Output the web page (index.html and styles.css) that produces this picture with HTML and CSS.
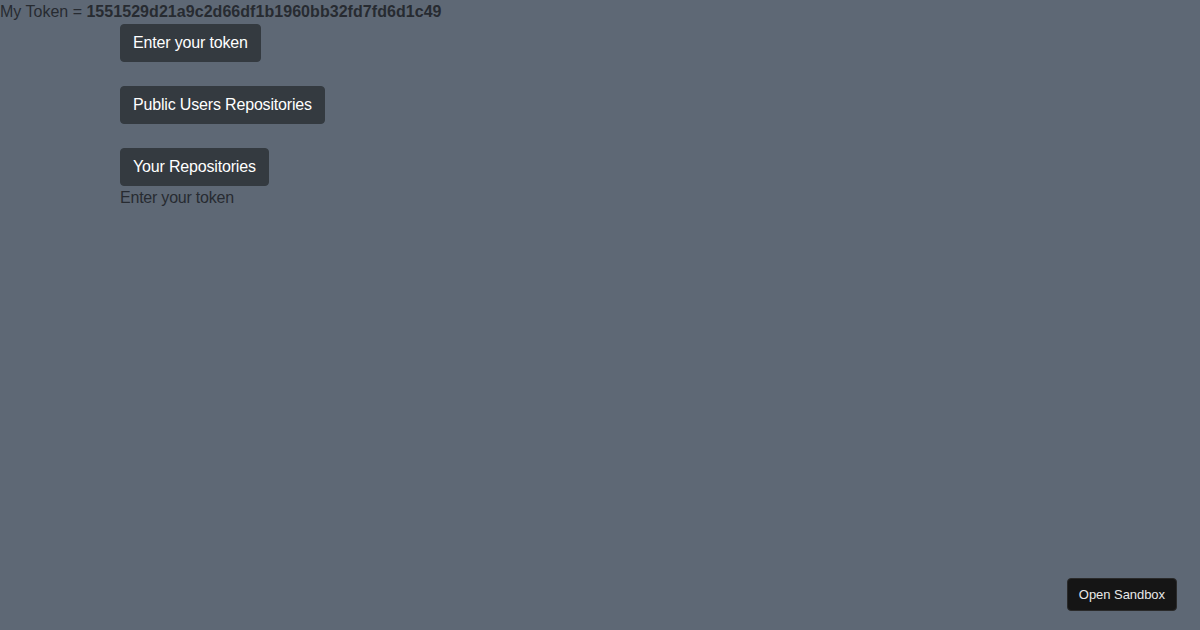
FILE: index.html
```html
<!DOCTYPE html>
<html>
<head>
<meta charset="utf-8">
<link rel="stylesheet" href="styles.css">
</head>
<body>
<div class="token-line">My Token = <strong>1551529d21a9c2d66df1b1960bb32fd7fd6d1c49</strong></div>
<div class="panel">
  <button class="btn">Enter your token</button>
  <button class="btn">Public Users Repositories</button>
  <button class="btn">Your Repositories</button>
  <div class="hint">Enter your token</div>
</div>
<button class="sandbox">Open Sandbox</button>
</body>
</html>
```

FILE: styles.css
```css
html, body {
  margin: 0;
  padding: 0;
  height: 100%;
}
body {
  background: #5e6875;
  color: #272b31;
  font-family: "Liberation Sans", Arial, sans-serif;
  font-size: 16px;
  line-height: 24px;
  position: relative;
  overflow: hidden;
}
.token-line strong {
  font-weight: bold;
  letter-spacing: 0.05px;
}
.panel {
  display: flex;
  flex-direction: column;
  align-items: flex-start;
  padding-left: 120px;
  gap: 24px;
}
.btn {
  font-family: "Liberation Sans", Arial, sans-serif;
  font-size: 16px;
  line-height: 24px;
  letter-spacing: -0.17px;
  color: #ffffff;
  background: #343a40;
  border: 1px solid #343a40;
  border-radius: 4px;
  padding: 6px 12px;
  cursor: pointer;
}
.hint {
  margin-top: -24px;
  letter-spacing: -0.22px;
}
.sandbox {
  position: absolute;
  right: 23px;
  bottom: 19px;
  height: 33px;
  padding: 0 11px;
  background: #151515;
  color: #e8e8e8;
  border: 1px solid #2a2a2a;
  border-radius: 4px;
  font-family: "Liberation Sans", Arial, sans-serif;
  font-size: 13px;
  letter-spacing: -0.05px;
}
```
